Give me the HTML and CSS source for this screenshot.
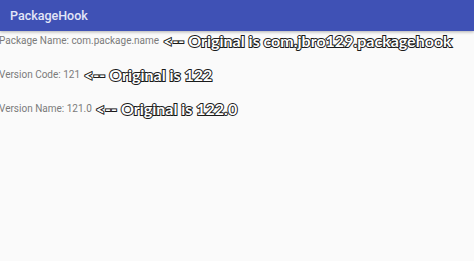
FILE: index.html
```html
<!DOCTYPE html>
<html>
<head>
<meta charset="utf-8">
<link rel="stylesheet" href="styles.css">
</head>
<body>
<div class="appbar"><span class="title">PackageHook</span></div>
<div class="content">
  <div class="row"><span class="label">Package Name: com.package.name</span><span class="note">&lt;-- Original is com.jbro129.packagehook</span></div>
  <div class="row"><span class="label">Version Code: 121</span><span class="note">&lt;-- Original is 122</span></div>
  <div class="row"><span class="label">Version Name: 121.0</span><span class="note">&lt;-- Original is 122.0</span></div>
</div>
</body>
</html>
```
FILE: styles.css
```css
html, body {
  margin: 0;
  padding: 0;
  background: #fafafa;
  width: 474px;
  height: 261px;
  overflow: hidden;
}
.appbar {
  height: 31px;
  background: #3f51b5;
  display: flex;
  align-items: center;
  padding-left: 10px;
  box-shadow: 0 1px 3px rgba(0,0,0,0.3);
}
.title {
  font-family: Roboto, "Noto Sans", sans-serif;
  font-weight: 500;
  font-size: 12.5px;
  color: #e3e6f7;
}
.content {
  display: flex;
  flex-direction: column;
  gap: 16px;
  margin-left: -1px;
}
.row {
  display: flex;
  align-items: center;
  height: 18px;
  gap: 4px;
  white-space: nowrap;
}
.label {
  font-family: Roboto, "Noto Sans", sans-serif;
  font-size: 10px;
  color: #7a7a7a;
}
.note {
  font-family: Lato, "Open Sans", sans-serif;
  font-weight: 700;
  font-size: 16px;
  color: #ffffff;
  -webkit-text-stroke: 2px #1a1a1a;
  paint-order: stroke fill;
  letter-spacing: 0;
}
```
